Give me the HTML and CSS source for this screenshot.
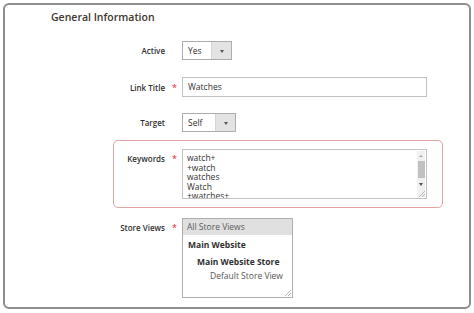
FILE: index.html
```html
<!DOCTYPE html>
<html lang="en">
<head>
  <meta charset="UTF-8" />
  <title>General Information</title>
  <link rel="stylesheet" href="styles.css">
</head>
<body>
  <div class="frame">
    <h2 class="title">General Information</h2>

    <div class="fields">
      <div class="field row-active">
        <label class="label">Active</label>
        <span class="star"></span>
        <div class="select select-yes">
          <span class="select-value">Yes</span>
          <span class="select-arrow"></span>
        </div>
      </div>

      <div class="field row-link">
        <label class="label">Link Title</label>
        <span class="star">*</span>
        <div class="input">Watches</div>
      </div>

      <div class="field row-target">
        <label class="label">Target</label>
        <span class="star"></span>
        <div class="select select-self">
          <span class="select-value">Self</span>
          <span class="select-arrow"></span>
        </div>
      </div>

      <div class="field field-top highlight">
        <label class="label">Keywords</label>
        <span class="star">*</span>
        <div class="textarea">
          <div class="textarea-text">
            <div>watch+</div>
            <div>+watch</div>
            <div>watches</div>
            <div>Watch</div>
            <div>+watches+</div>
          </div>
          <div class="scrollbar">
            <span class="sb-up"></span>
            <span class="sb-thumb"></span>
            <span class="sb-down"></span>
          </div>
          <span class="grip"></span>
        </div>
      </div>

      <div class="field field-top row-store">
        <label class="label">Store Views</label>
        <span class="star">*</span>
        <div class="multiselect">
          <div class="option selected">All Store Views</div>
          <div class="option group">Main Website</div>
          <div class="option group sub">Main Website Store</div>
          <div class="option view">Default Store View</div>
          <span class="grip"></span>
        </div>
      </div>
    </div>
  </div>
</body>
</html>
```

FILE: styles.css
```css
body {
  margin: 0;
  background: #fff;
  font-family: "Open Sans", Arial, sans-serif;
  color: #303030;
}

.frame {
  margin: 3px;
  height: 306px;
  border: 2px solid #8d8d8d;
  border-radius: 6px;
  box-sizing: border-box;
  padding: 5px 0 0 46px;
}

.title {
  margin: 0;
  font-size: 10.5px;
  font-weight: 600;
  color: #41362f;
  line-height: 15px;
}

.fields {
  display: flex;
  flex-direction: column;
  margin-left: 62px;
  margin-top: 15px;
  width: 330px;
}

.field {
  display: flex;
  align-items: center;
  border: 1px solid transparent;
  border-radius: 5px;
}

.field-top {
  align-items: flex-start;
}

.row-link {
  margin-top: 15px;
}

.row-target {
  margin-top: 14px;
}

.highlight {
  margin-top: 7px;
  padding: 8px 0 8px;
  border-color: #e2a3a3;
}

.row-store {
  margin-top: 9px;
}

.label {
  width: 51px;
  flex: none;
  text-align: right;
  font-size: 8px;
  font-weight: 600;
  color: #303030;
  white-space: nowrap;
}

.field-top .label {
  margin-top: 4px;
}

.star {
  width: 17px;
  flex: none;
  text-align: center;
  color: #e22626;
  font-size: 9px;
  padding-left: 2px;
  box-sizing: border-box;
}

.field-top .star {
  margin-top: 3px;
}

.select {
  display: flex;
  height: 19px;
  border: 1px solid #adadad;
  box-sizing: border-box;
  font-size: 8.5px;
}

.select-yes {
  width: 50px;
}

.select-self {
  width: 54px;
}

.select-value {
  flex: 1;
  padding-left: 5px;
  line-height: 17px;
}

.select-arrow {
  width: 19px;
  background: #e3e3e3;
  border-left: 1px solid #d4d4d4;
  position: relative;
}

.select-arrow::after {
  content: "";
  position: absolute;
  left: 8px;
  top: 8px;
  border-left: 2px solid transparent;
  border-right: 2px solid transparent;
  border-top: 3px solid #555;
}

.input {
  width: 245px;
  height: 20px;
  border: 1px solid #c2c2c2;
  box-sizing: border-box;
  padding-left: 5px;
  font-size: 8.5px;
  line-height: 18px;
}

.textarea {
  position: relative;
  width: 245px;
  height: 50px;
  border: 1px solid #c2c2c2;
  box-sizing: border-box;
  overflow: hidden;
}

.textarea-text {
  padding: 3px 0 0 4px;
  font-size: 8.5px;
  line-height: 9.5px;
  color: #303030;
}

.scrollbar {
  position: absolute;
  right: 1px;
  top: 1px;
  bottom: 1px;
  width: 8px;
  background: #f1f1f1;
}

.sb-up,
.sb-down {
  position: absolute;
  left: 2px;
  border-left: 2px solid transparent;
  border-right: 2px solid transparent;
}

.sb-up {
  top: 4px;
  border-bottom: 2px solid #a3a3a3;
}

.sb-down {
  bottom: 11px;
  border-top: 3px solid #505050;
}

.sb-thumb {
  position: absolute;
  left: 1px;
  right: 0;
  top: 10px;
  height: 17px;
  background: #c1c1c1;
}

.grip {
  position: absolute;
  right: 1px;
  bottom: 1px;
  width: 6px;
  height: 6px;
  background: linear-gradient(135deg, transparent 45%, #b5b5b5 45%, #b5b5b5 55%, transparent 55%, transparent 70%, #b5b5b5 70%, #b5b5b5 80%, transparent 80%);
}

.multiselect {
  position: relative;
  width: 111px;
  height: 80px;
  border: 1px solid #adadad;
  box-sizing: border-box;
  font-size: 8.5px;
}

.option {
  white-space: nowrap;
}

.selected {
  background: #e0e0e0;
  color: #5a5a5a;
  padding: 2px 4px;
  line-height: 12px;
}

.group {
  font-weight: 700;
  padding-left: 5px;
  margin-top: 3px;
  line-height: 14px;
}

.sub {
  padding-left: 14px;
  margin-top: 3px;
}

.view {
  padding-left: 27px;
  color: #555;
  line-height: 13px;
}
```
